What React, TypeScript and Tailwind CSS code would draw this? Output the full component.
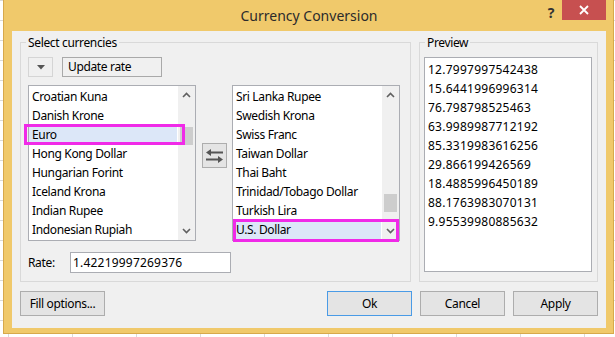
const leftItems = [
  "Croatian Kuna",
  "Danish Krone",
  "Euro",
  "Hong Kong Dollar",
  "Hungarian Forint",
  "Iceland Krona",
  "Indian Rupee",
  "Indonesian Rupiah",
];

const rightItems = [
  "Sri Lanka Rupee",
  "Swedish Krona",
  "Swiss Franc",
  "Taiwan Dollar",
  "Thai Baht",
  "Trinidad/Tobago Dollar",
  "Turkish Lira",
  "U.S. Dollar",
];

const preview = [
  "12.7997997542438",
  "15.6441996996314",
  "76.798798525463",
  "63.9989987712192",
  "85.3319983616256",
  "29.866199426569",
  "18.4885996450189",
  "88.1763983070131",
  "9.95539980885632",
];

function Chevron({ up }: { up?: boolean }) {
  return (
    <svg width="9" height="6" viewBox="0 0 9 6" className="block">
      <polyline
        points={up ? "1,5 4.5,1.5 8,5" : "1,1 4.5,4.5 8,1"}
        fill="none"
        stroke="#606060"
        strokeWidth="1.6"
      />
    </svg>
  );
}

function ListBox({
  items,
  selected,
  thumbTop,
  mark,
}: {
  items: string[];
  selected: number;
  thumbTop: number;
  mark: "left" | "right";
}) {
  return (
    <div className="relative flex h-[156px] w-[168px] border border-[#abadb3] bg-white">
      <ul className="flex flex-1 flex-col pt-[1px]">
        {items.map((it, i) => (
          <li
            key={it}
            className={`h-[19px] pl-[3px] leading-[19px] whitespace-nowrap ${
              i === selected ? "mr-[1px] bg-[#dce7f8]" : ""
            }`}
          >
            {it}
          </li>
        ))}
      </ul>
      <div className="relative flex w-[17px] flex-col items-center justify-between bg-[#f0f0f0] py-[6px]">
        <Chevron up />
        <Chevron />
        <div
          className="absolute left-[2px] h-[18px] w-[13px] bg-[#cdcdcd]"
          style={{ top: thumbTop }}
        />
      </div>
      {mark === "left" ? (
        <div className="pointer-events-none absolute left-[-5px] top-[38px] h-[21px] w-[161px] border-[3px] border-[#f02ae8]" />
      ) : (
        <div className="pointer-events-none absolute left-[0px] top-[133px] h-[23px] w-[166px] border-[3px] border-[#f02ae8]" />
      )}
    </div>
  );
}

function SwapIcon() {
  return (
    <svg width="19" height="16" viewBox="0 0 19 16">
      <path d="M1 4.5 L6 1 L6 3.5 L18 3.5 L18 5.5 L6 5.5 L6 8 Z" fill="#555" />
      <path d="M18 11.5 L13 8 L13 10.5 L1 10.5 L1 12.5 L13 12.5 L13 15 Z" fill="#555" />
    </svg>
  );
}

function Btn({ label, primary }: { label: string; primary?: boolean }) {
  return (
    <button
      className={`h-[25px] w-[85px] border bg-[#e4e4e4] text-[12px] text-black ${
        primary ? "border-[#4a9be6]" : "border-[#adadad]"
      }`}
    >
      {label}
    </button>
  );
}

export default function App() {
  return (
    <div className="h-[337px] w-[615px] overflow-hidden bg-white bg-[linear-gradient(90deg,#dadada_1px,transparent_1px),linear-gradient(#dadada_1px,transparent_1px)] bg-[size:64px_20px] bg-[position:8px_0px] font-['Noto_Sans',sans-serif] text-[12px] tracking-[-0.35px] text-black">
      <div className="ml-[3px] flex h-[334px] w-[611px] flex-col border-x border-b border-[#d7a94c] bg-[#f0c96b] pb-[5px] pl-[8px] pr-[7px]">
        {/* title bar */}
        <div className="relative flex h-[31px] items-center justify-center">
          <span className="text-[14px] tracking-normal text-[#2b2b2b]">Currency Conversion</span>
          <div className="absolute right-0 top-0 flex items-start">
            <span className="mr-[8px] mt-[2px] text-[14px] font-bold text-[#333]">?</span>
            <div className="flex h-[20px] w-[44px] items-center justify-center bg-[#c75050]">
              <svg width="10" height="10" viewBox="0 0 10 10">
                <path d="M1 1 L9 9 M9 1 L1 9" stroke="white" strokeWidth="1.8" />
              </svg>
            </div>
          </div>
        </div>

        {/* client area */}
        <div className="flex flex-1 flex-col bg-[#f0f0f0] px-[8px] pt-[11px]">
          <div className="flex gap-[8px]">
            {/* Select currencies */}
            <div className="relative h-[240px] w-[391px] border border-[#d9d9d9] px-[7px] pt-[14px]">
              <span className="absolute left-[5px] top-[-9px] bg-[#f0f0f0] px-[2px] leading-[18px]">
                Select currencies
              </span>
              <div className="flex gap-[9px]">
                <div className="flex h-[20px] w-[25px] items-center justify-center border border-[#d5d5d5]">
                  <svg width="8" height="5" viewBox="0 0 8 5">
                    <path d="M0 0 L8 0 L4 4.5 Z" fill="#555" />
                  </svg>
                </div>
                <div className="flex h-[20px] w-[100px] items-center border border-[#a9a9a9] pl-[5px]">
                  Update rate
                </div>
              </div>
              <div className="mt-[8px] flex">
                <ListBox items={leftItems} selected={2} thumbTop={41} mark="left" />
                <button className="ml-[6px] mr-[5px] mt-[58px] flex h-[25px] w-[25px] items-center justify-center border border-[#adadad] bg-[#e4e4e4]">
                  <SwapIcon />
                </button>
                <ListBox items={rightItems} selected={7} thumbTop={108} mark="right" />
              </div>
              <div className="mt-[11px] flex items-center">
                <span className="w-[42px]">Rate:</span>
                <div className="flex h-[21px] w-[161px] items-center border border-[#abadb3] bg-white pl-[2px] tracking-[0.2px]">
                  1.42219997269376
                </div>
              </div>
            </div>

            {/* Preview */}
            <div className="relative h-[240px] w-[179px] border border-[#d9d9d9] pl-[4px] pt-[14px]">
              <span className="absolute left-[5px] top-[-9px] bg-[#f0f0f0] px-[2px] leading-[18px]">
                Preview
              </span>
              <div className="h-[215px] w-[168px] border border-[#abadb3] bg-white pl-[3px] pt-[2px] tracking-[0.25px]">
                {preview.map((v) => (
                  <div key={v} className="leading-[19px]">
                    {v}
                  </div>
                ))}
              </div>
            </div>
          </div>

          <div className="mt-[9px] flex justify-between">
            <Btn label="Fill options..." />
            <div className="flex gap-[8px]">
              <Btn label="Ok" primary />
              <Btn label="Cancel" />
              <Btn label="Apply" />
            </div>
          </div>
        </div>
      </div>
    </div>
  );
}
